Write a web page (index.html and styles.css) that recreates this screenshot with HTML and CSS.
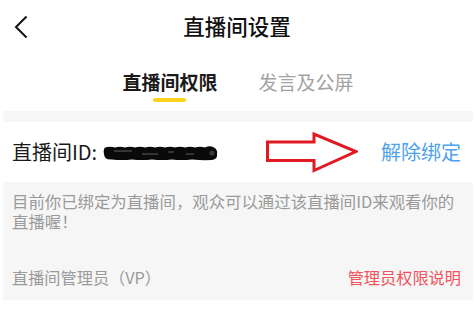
FILE: index.html
```html
<!DOCTYPE html>
<html lang="zh-CN">
<head>
    <meta charset="UTF-8">
    <meta name="viewport" content="width=device-width, initial-scale=1.0">
    <title>直播间设置</title>
    <link rel="stylesheet" href="styles.css">
</head>
<body>

    <div class="header">
        <a class="back-button" href="#">
            <svg width="14" height="24" viewBox="0 0 14 24">
                <path d="M12.5 1.5 L2 12 L12.5 22.5" fill="none" stroke="#111" stroke-width="2" stroke-linejoin="miter"/>
            </svg>
        </a>
        <div class="header-title">直播间设置</div>
        <div></div>
    </div>

    <div class="tabs">
        <div class="tab active">直播间权限<span class="tab-line"></span></div>
        <div class="tab">发言及公屏</div>
    </div>

    <div class="gray-gap"></div>

    <div class="id-row">
        <span class="id-label">直播间ID:</span>
        <!-- 打码的ID -->
        <svg class="id-mask" width="118" height="18" viewBox="0 0 118 18">
            <path d="M3 3.5 Q8 2 13 3.5 Q18 2 23 3.5 Q28 2 33 3.5 Q38 2 43 3.5 Q48 2 53 3.5 Q58 2 63 3.5 Q68 2 73 3.5 Q78 2 83 3.5 Q88 2 93 3.5 Q98 2 103 3.5 Q108 1 112 3.5 Q116 6 115 10 Q116 15 110 16 Q100 16.5 90 15.5 Q80 16.5 70 15.5 Q60 16.5 50 15.5 Q40 16.5 30 15.5 Q20 16.5 10 15.5 Q2 16 2 10 Q1 6 3 3.5 Z" fill="#0a0a0a"/>
            <path d="M12 7 H30 M40 10 H56 M66 8 H72 M84 10 H92" stroke="#fff" stroke-width="1" opacity="0.35"/>
            <circle cx="110" cy="9" r="2.5" fill="#fff" opacity="0.2"/>
        </svg>
        <svg class="red-arrow" width="92" height="41" viewBox="0 0 92 41">
            <path d="M1.5 10 H48 V2 L90 19.5 L48 38.5 V28.5 H1.5 Z" fill="#fff" stroke="#e01a22" stroke-width="3" stroke-linejoin="miter"/>
        </svg>
        <a class="unbind-link" href="#">解除绑定</a>
    </div>

    <div class="info-box">
        <p class="info-text">目前你已绑定为直播间，观众可以通过该直播间ID来观看你的直播喔！</p>
        <div class="admin-row">
            <span>直播间管理员（VP）</span>
            <a class="admin-link" href="#">管理员权限说明</a>
        </div>
    </div>

</body>
</html>
```

FILE: styles.css
```css
/* 页面基础样式 */
body {
    margin: 0;
    width: 474px;
    background-color: #fff;
    font-family: "Noto Sans CJK SC", "Noto Sans", sans-serif;
    color: #1a1a1a;
}

a {
    text-decoration: none;
}

/* 顶部标题栏 */
.header {
    display: grid;
    grid-template-columns: 48px 1fr 48px;
    align-items: center;
    height: 52px;
}

.back-button {
    display: flex;
    padding-left: 14px;
    padding-top: 1px;
}

.header-title {
    text-align: center;
    font-size: 21.5px;
    font-weight: 500;
    line-height: 52px;
    color: #111;
}

/* 标签页 */
.tabs {
    display: flex;
    justify-content: center;
    gap: 41px;
    padding-top: 18px;
    padding-left: 2px;
}

.tab {
    display: flex;
    flex-direction: column;
    align-items: center;
    font-size: 19px;
    line-height: 24px;
    color: #a3a3a3;
}

.tab.active {
    color: #1a1a1a;
    font-weight: 700;
}

.tab-line {
    width: 33px;
    height: 4px;
    margin-top: 4px;
    border-radius: 2px;
    background-color: #fcd31c; /* 黄色下划线 */
}

.gray-gap {
    height: 11px;
    margin: 9px 1px 0 3px;
    background-color: #f6f6f6;
}

/* 直播间ID行 */
.id-row {
    display: flex;
    align-items: center;
    height: 60px;
    padding: 0 13px 0 12px;
}

.id-label {
    font-size: 20px;
    line-height: 24px;
    color: #1a1a1a;
}

.id-mask {
    margin-left: 5px;
    margin-top: 1px;
}

.red-arrow {
    margin-left: auto;
    margin-right: 23px;
    margin-top: 1px;
}

.unbind-link {
    font-size: 20px;
    line-height: 24px;
    color: #4ea2ea;
}

/* 说明区域 */
.info-box {
    margin: 0 1px 0 3px;
    padding: 9px 12px 12px 9px;
    background-color: #f6f6f6;
    color: #9a9a9a;
    font-size: 16.4px;
}

.info-text {
    margin: 0;
    line-height: 20px;
}

.admin-row {
    display: flex;
    justify-content: space-between;
    margin-top: 35px;
    line-height: 22px;
    font-size: 16.2px;
}

.admin-link {
    color: #f0535c;
}
```
